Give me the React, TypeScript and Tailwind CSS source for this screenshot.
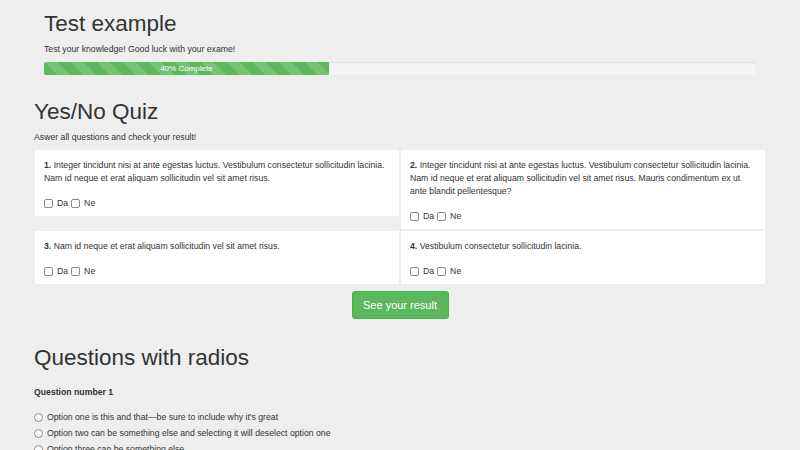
import React from "react";

const Box = () => (
  <span className="inline-block w-[9px] h-[9px] border border-[#8a8a8a] rounded-[2px] bg-white align-middle" />
);

const Radio = () => (
  <span className="inline-block w-[9px] h-[9px] border border-[#8a8a8a] rounded-full bg-white" />
);

const Card = ({ n, text }: { n: number; text: string }) => (
  <div className="bg-white pt-[9px] pb-[6px] px-[9px]">
    <p className="leading-[13px] mb-[12px]">
      <b>{n}.</b> {text}
    </p>
    <div className="flex items-center h-[13px] leading-[13px]">
      <Box />
      <span className="ml-[4px] mr-[3px]">Da</span>
      <Box />
      <span className="ml-[4px]">Ne</span>
    </div>
  </div>
);

export default function App() {
  return (
    <div
      className="w-[800px] h-[450px] overflow-hidden bg-[#eeeeee] text-[#333333] text-[8.7px]"
      style={{ fontFamily: '"Liberation Sans", Arial, sans-serif' }}
    >
      <div className="px-[44px] pt-[10px]">
        <h1 className="text-[22.5px] leading-[28px] font-normal">Test example</h1>
        <p className="mt-[5px] leading-[13px]">Test your knowledge! Good luck with your exame!</p>
        <div className="mt-[6px] h-[13px] bg-[#f5f5f5] rounded-[2px] shadow-[inset_0_1px_2px_rgba(0,0,0,0.1)] overflow-hidden">
          <div
            className="h-full w-[40%] bg-[#5cb85c] text-white text-[8px] leading-[13px] text-center"
            style={{
              backgroundImage:
                "linear-gradient(45deg, rgba(255,255,255,.15) 25%, transparent 25%, transparent 50%, rgba(255,255,255,.15) 50%, rgba(255,255,255,.15) 75%, transparent 75%, transparent)",
              backgroundSize: "26px 26px",
            }}
          >
            40% Complete
          </div>
        </div>
      </div>

      <div className="px-[34px] pt-[23px]">
        <h1 className="text-[22.5px] leading-[28px] font-normal">Yes/No Quiz</h1>
        <p className="mt-[5px] leading-[13px]">Aswer all questions and check your result!</p>
        <div className="mt-[6px] ml-[1px] mr-[1px] grid grid-cols-2 gap-x-[2px] gap-y-[2px] items-start">
          <Card
            n={1}
            text="Integer tincidunt nisi at ante egestas luctus. Vestibulum consectetur sollicitudin lacinia. Nam id neque et erat aliquam sollicitudin vel sit amet risus."
          />
          <Card
            n={2}
            text="Integer tincidunt nisi at ante egestas luctus. Vestibulum consectetur sollicitudin lacinia. Nam id neque et erat aliquam sollicitudin vel sit amet risus. Mauris condimentum ex ut ante blandit pellentesque?"
          />
          <Card n={3} text="Nam id neque et erat aliquam sollicitudin vel sit amet risus." />
          <Card n={4} text="Vestibulum consectetur sollicitudin lacinia." />
        </div>
        <div className="flex justify-center mt-[7px]">
          <button className="bg-[#5cb85c] border border-[#4cae4c] text-white text-[11px] leading-[16px] px-[10px] py-[5px] rounded-[3px] h-[28px] w-[97px]">
            See your result
          </button>
        </div>

        <h1 className="mt-[25px] text-[22.5px] leading-[28px] font-normal">Questions with radios</h1>
        <p className="mt-[14px] leading-[13px] font-bold">Question number 1</p>
        <div className="mt-[12px] flex flex-col gap-[3px]">
          {[
            "Option one is this and that\u2014be sure to include why it's great",
            "Option two can be something else and selecting it will deselect option one",
            "Option three can be something else",
          ].map((t) => (
            <div key={t} className="flex items-center h-[13px] leading-[13px]">
              <Radio />
              <span className="ml-[4px]">{t}</span>
            </div>
          ))}
        </div>
      </div>
    </div>
  );
}
